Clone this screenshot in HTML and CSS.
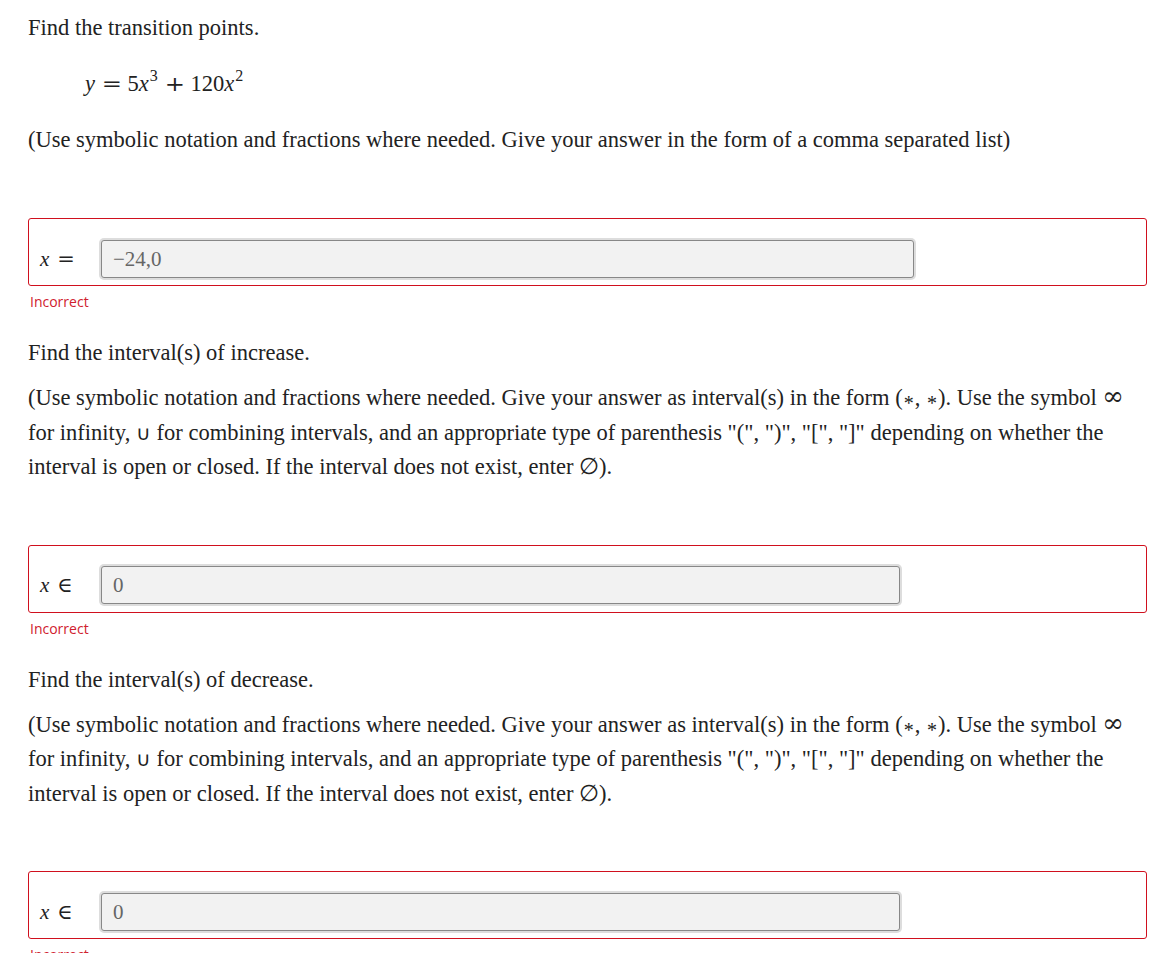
FILE: index.html
```html
<!doctype html>
<html>
    <head>
        <meta charset="UTF-8">
        <title>Transition points</title>
        <link rel="stylesheet" href="styles.css">
    </head>
    <body>
        <div class="page">
            <p class="q">Find the transition points.</p>
            <p class="eq"><i>y</i><span class="op">=</span>5<i>x</i><sup>3</sup><span class="op">+</span>120<i>x</i><sup>2</sup></p>
            <p class="q">(Use symbolic notation and fractions where needed. Give your answer in the form of a comma separated list)</p>

            <div class="answer">
                <span class="label"><i>x</i><span class="rel">=</span></span>
                <div class="field wide">−24,0</div>
            </div>
            <div class="status">Incorrect</div>

            <p class="q head">Find the interval(s) of increase.</p>
            <p class="q note">(Use symbolic notation and fractions where needed. Give your answer as interval(s) in the form (<span class="ast">*</span>, <span class="ast">*</span>). Use the symbol <span class="inf">∞</span> for infinity, <span class="cup">∪</span> for combining intervals, and an appropriate type of parenthesis "(", ")", "[", "]" depending on whether the interval is open or closed. If the interval does not exist, enter ∅).</p>

            <div class="answer">
                <span class="label"><i>x</i><span class="rel">∈</span></span>
                <div class="field">0</div>
            </div>
            <div class="status">Incorrect</div>

            <p class="q head">Find the interval(s) of decrease.</p>
            <p class="q note">(Use symbolic notation and fractions where needed. Give your answer as interval(s) in the form (<span class="ast">*</span>, <span class="ast">*</span>). Use the symbol <span class="inf">∞</span> for infinity, <span class="cup">∪</span> for combining intervals, and an appropriate type of parenthesis "(", ")", "[", "]" depending on whether the interval is open or closed. If the interval does not exist, enter ∅).</p>

            <div class="answer">
                <span class="label"><i>x</i><span class="rel">∈</span></span>
                <div class="field">0</div>
            </div>
            <div class="status">Incorrect</div>
        </div>
    </body>
</html>
```

FILE: styles.css
```css
*{
    margin: 0;
    padding: 0;
    box-sizing: border-box;
}
body{
    background: #fff;
    color: #222;
    font-family: "Liberation Serif", "Times New Roman", serif;
    font-size: 22.5px;
    line-height: 34px;
}
.page{
    padding: 11px 15px 0 28px;          /*左边留白*/
}
.q{
    margin-bottom: 22px;
}
.eq{
    padding-left: 57px;
    margin-bottom: 22px;
}
.eq sup{
    font-size: 16px;
    line-height: 0;
    vertical-align: 10px;
    margin-left: 1px;
}
.op{
    display: inline-block;
    margin: 0 7px 0 8px;
    font-family: "DejaVu Serif", serif;
    font-size: 21px;
    line-height: 0;
    transform: scaleX(1.15);
}
.ast{
    position: relative;
    top: 5px;
    font-size: 20px;
    margin: 0 1px;
}
.inf{
    font-family: "DejaVu Serif", serif;
    font-size: 26px;
    line-height: 0;
}
.cup{
    font-family: "DejaVu Sans", sans-serif;
    font-weight: 200;
    font-size: 20px;
    line-height: 0;
}
.head{
    margin-bottom: 11px;
}
.note{
    line-height: 34.5px;
    margin-bottom: 0;
}
.q + .answer{
    margin-top: 61px;
}
.note + .answer{
    margin-top: 60px;
}
.answer{
    display: flex;
    align-items: center;
    height: 68px;
    padding: 13px 11px 0 11px;
    border: 1px solid #d0101e;
    border-radius: 3px;
}
.label{
    width: 61px;
    font-size: 21px;
}
.rel{
    display: inline-block;
    margin-left: 8px;
    font-family: "DejaVu Serif", serif;
    font-size: 21px;
    line-height: 0;
}
.field{
    width: 799px;
    height: 38px;
    padding-left: 11px;
    line-height: 36px;
    font-size: 21px;
    color: #666;
    background: #f2f2f2;
    border: 1px solid #888;
    border-radius: 3px;
    box-shadow: 0 0 0 2px #ddd;
}
.field.wide{
    width: 813px;
}
.status{
    margin: 7px 0 25px 2px;
    font-family: "Open Sans", sans-serif;
    font-size: 14px;
    line-height: 18px;
    color: #d0202e;
}
```
